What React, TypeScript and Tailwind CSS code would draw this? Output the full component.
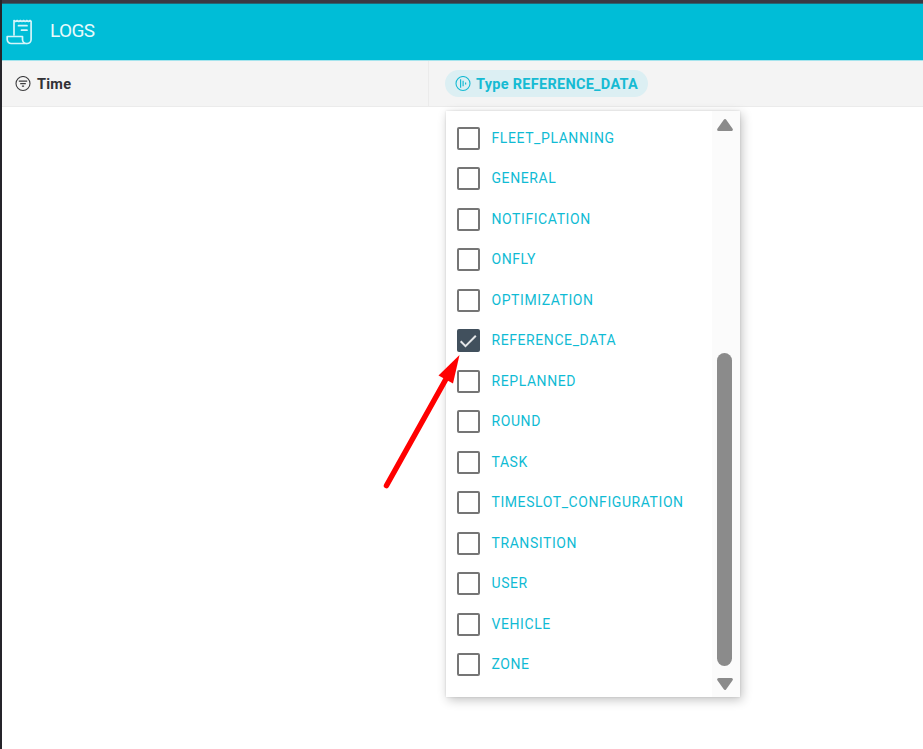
import React, { useState } from 'react';

const LOG_TYPES = [
  'FLEET_PLANNING',
  'GENERAL',
  'NOTIFICATION',
  'ONFLY',
  'OPTIMIZATION',
  'REFERENCE_DATA',
  'REPLANNED',
  'ROUND',
  'TASK',
  'TIMESLOT_CONFIGURATION',
  'TRANSITION',
  'USER',
  'VEHICLE',
  'ZONE',
];

const LogsIcon = () => (
  <svg width="28" height="28" viewBox="0 0 28 28" fill="none" stroke="#d5f5fa" strokeWidth="1.7" strokeLinejoin="round" strokeLinecap="round">
    <path d="M8 17V2.500l1.600 1 1.600-1 1.600 1 1.600-1 1.600 1 1.600-1 1.600 1 1.600-1 1.600 1 1.600-1 1.100 1V21.500a4 4 0 0 1-4 4" />
    <path d="M1.200 18.500h15.300v3a4 4 0 0 0 4 4H5.200a4 4 0 0 1-4-4z" />
    <path d="M12.500 7.700h8.500M15.500 12.200h5.500" />
  </svg>
);

const FilterIcon = () => (
  <svg width="16" height="16" viewBox="0 0 16 16" fill="none" stroke="#3c3c3e" strokeWidth="1.100">
    <circle cx="8" cy="7.500" r="7" />
    <path d="M3.800 5.100h8.400M5.200 7.600h5.600M6.900 10.100h2.200" strokeWidth="1.200" />
  </svg>
);

const ActiveFilterIcon = () => (
  <svg width="16" height="16" viewBox="0 0 16 16" fill="none" stroke="#16bbd3" strokeWidth="1.100">
    <circle cx="8" cy="7.500" r="7" />
    <path d="M5.600 3.300v8.400M8.100 4.700v5.600M10.600 6.400v2.200" strokeWidth="1.200" />
  </svg>
);

interface CheckboxRowProps {
  label: string;
  checked: boolean;
  onToggle: () => void;
}

const CheckboxRow = ({ label, checked, onToggle }: CheckboxRowProps) => (
  <button
    type="button"
    role="checkbox"
    aria-checked={checked}
    onClick={onToggle}
    className="flex h-[40.5px] w-full items-center gap-[11.5px] pl-[11px] text-left"
  >
    {checked ? (
      <span className="flex size-[23px] shrink-0 items-center justify-center rounded-[2px] bg-[#41505d]">
        <svg width="23" height="23" viewBox="0 0 23 23" fill="none" stroke="#e4e6e8" strokeWidth="2">
          <path d="M3.700 12.300l4.800 4.800L18.800 6.700" />
        </svg>
      </span>
    ) : (
      <span className="size-[23px] shrink-0 rounded-[2px] border-2 border-[#757575]" />
    )}
    <span className="text-[14px] leading-[15px] tracking-[0.58px] text-[#10bbd4]">{label}</span>
  </button>
);

const Scrollbar = () => (
  <div className="flex w-[28px] shrink-0 flex-col items-center bg-[#fbfbfb] pt-[7px] pr-[3px] pb-[6px]">
    <svg width="18" height="14" viewBox="0 0 18 14" fill="#8b8b8b" stroke="#8b8b8b" strokeWidth="3" strokeLinejoin="round">
      <path d="M9 2.500L15.400 11.500H2.600z" />
    </svg>
    <div className="mt-[221px] h-[313px] w-[15px] rounded-full bg-[#8b8b8b]" />
    <svg className="mt-auto" width="18" height="14" viewBox="0 0 18 14" fill="#8b8b8b" stroke="#8b8b8b" strokeWidth="3" strokeLinejoin="round">
      <path d="M9 11.500L15.400 2.500H2.600z" />
    </svg>
  </div>
);

const PointerArrow = () => (
  <svg className="pointer-events-none absolute top-[345px] left-[374px]" width="90" height="150" viewBox="376 345 90 150">
    <path d="M386.500 485.500L446 379" stroke="#ff0000" strokeWidth="5.500" strokeLinecap="round" />
    <path d="M459.500 355L438.500 375.500L453 383.500z" fill="#ff0000" />
  </svg>
);

export default function App() {
  const [selected, setSelected] = useState<string[]>(['REFERENCE_DATA']);

  const toggle = (type: string) => {
    setSelected((prev) => (prev.includes(type) ? prev.filter((t) => t !== type) : [...prev, type]));
  };

  return (
    <div className="relative h-[749px] w-[923px] overflow-hidden border-l-2 border-[#25242a] bg-white font-['Roboto',sans-serif]">
      <div className="h-1 border-b border-[#286574] bg-[#3a3944]" />
      <header className="flex h-14 items-center bg-[#00bdd7] pl-1">
        <LogsIcon />
        <h1 className="-mt-[3px] ml-4 text-[19px] leading-none font-normal tracking-[-0.6px] text-[#e8fafc]">LOGS</h1>
      </header>

      <div className="flex h-[47px] border-t border-b border-t-[#a5e4ed] border-b-[#ebebeb] bg-[#f4f4f4]">
        <div className="flex w-[427px] items-center gap-[6px] border-r border-[#ebebeb] pl-[13px]">
          <FilterIcon />
          <span className="pt-[3px] text-[14.5px] leading-none font-bold tracking-[0.25px] text-[#323236]">Time</span>
        </div>
        <div className="flex flex-1 items-center pl-[16px]">
          <div className="flex h-[27px] w-[203px] items-center gap-[5px] rounded-full bg-[#dceff3] pl-[10px]">
            <ActiveFilterIcon />
            <span className="pt-[3px] text-[14.5px] leading-none font-bold tracking-[0.28px] whitespace-nowrap text-[#16bbd3]">
              Type {selected.join(', ')}
            </span>
          </div>
        </div>
      </div>

      <div className="absolute top-[111px] left-[444px] flex h-[586px] w-[294px] bg-white shadow-[2px_3px_10px_rgba(0,0,0,0.24),0_0_2px_rgba(0,0,0,0.12)]">
        <div className="flex-1 pt-[7px]">
          {LOG_TYPES.map((type) => (
            <CheckboxRow key={type} label={type} checked={selected.includes(type)} onToggle={() => toggle(type)} />
          ))}
        </div>
        <Scrollbar />
      </div>

      <PointerArrow />
    </div>
  );
}
